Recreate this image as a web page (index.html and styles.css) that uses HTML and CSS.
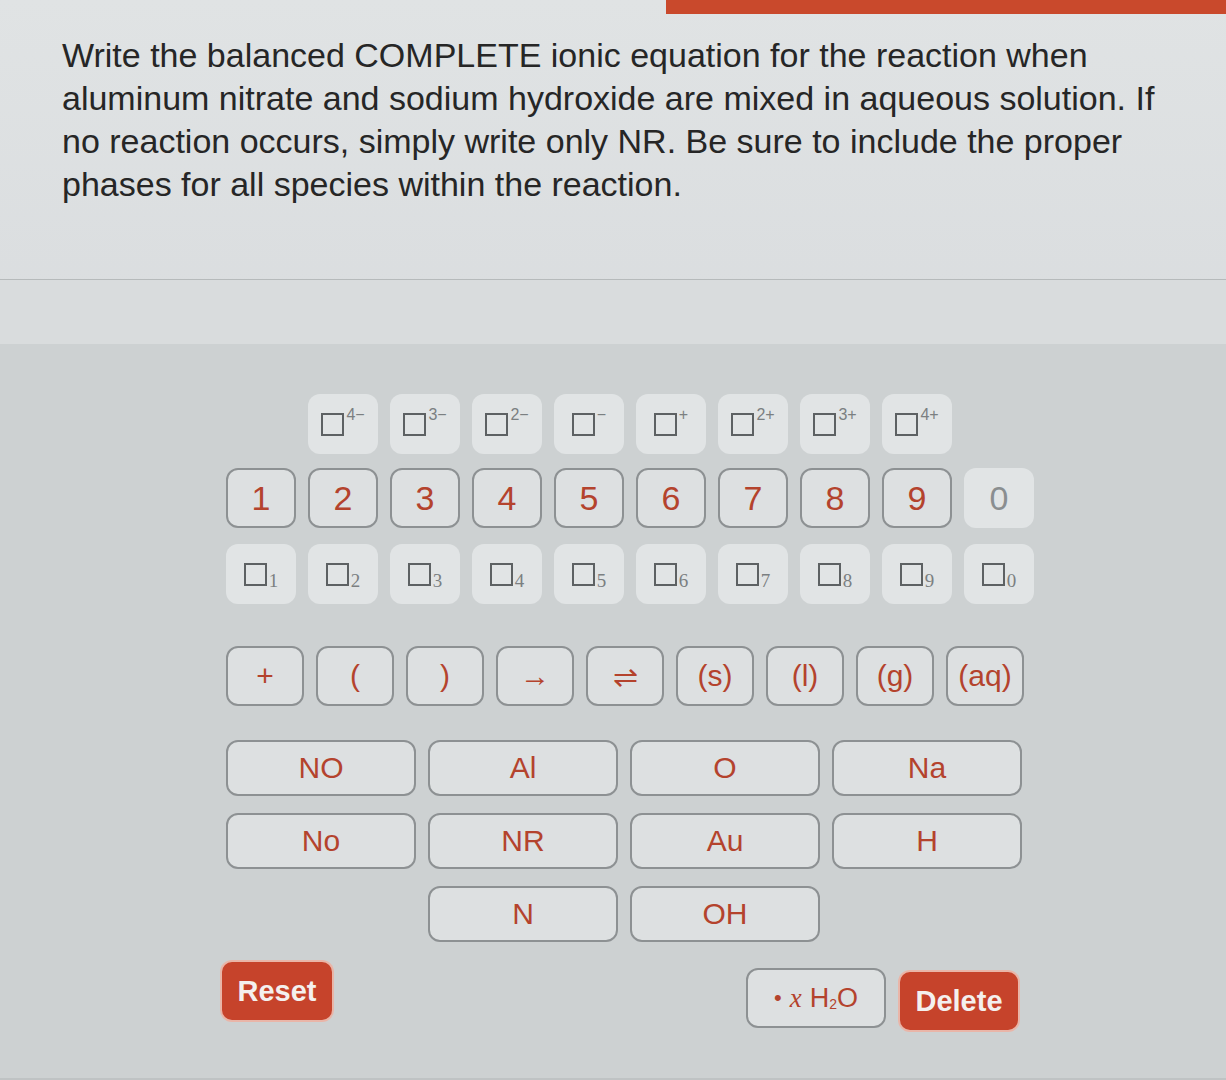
FILE: index.html
```html
<!DOCTYPE html>
<html>
<head>
<meta charset="utf-8">
<link rel="stylesheet" href="styles.css">
</head>
<body>
<div class="page">
  <div class="topbar"><div class="topbar-fill"></div></div>
  <div class="question">
    <p class="qtext">Write the balanced COMPLETE ionic equation for the reaction when<br>aluminum nitrate and sodium hydroxide are mixed in aqueous solution. If<br>no reaction occurs, simply write only NR. Be sure to include the proper<br>phases for all species within the reaction.</p>
  </div>
  <div class="band"></div>
  <div class="panel">
    <div class="palette">
      <div class="row row-charge">
        <div class="tile soft"><span class="box"></span><sup class="sup">4&minus;</sup></div>
        <div class="tile soft"><span class="box"></span><sup class="sup">3&minus;</sup></div>
        <div class="tile soft"><span class="box"></span><sup class="sup">2&minus;</sup></div>
        <div class="tile soft"><span class="box"></span><sup class="sup">&minus;</sup></div>
        <div class="tile soft"><span class="box"></span><sup class="sup">+</sup></div>
        <div class="tile soft"><span class="box"></span><sup class="sup">2+</sup></div>
        <div class="tile soft"><span class="box"></span><sup class="sup">3+</sup></div>
        <div class="tile soft"><span class="box"></span><sup class="sup">4+</sup></div>
      </div>
      <div class="row row-num">
        <div class="tile key num">1</div>
        <div class="tile key num">2</div>
        <div class="tile key num">3</div>
        <div class="tile key num">4</div>
        <div class="tile key num">5</div>
        <div class="tile key num">6</div>
        <div class="tile key num">7</div>
        <div class="tile key num">8</div>
        <div class="tile key num">9</div>
        <div class="tile soft num dim">0</div>
      </div>
      <div class="row row-sub">
        <div class="tile soft"><span class="box"></span><sub class="sub">1</sub></div>
        <div class="tile soft"><span class="box"></span><sub class="sub">2</sub></div>
        <div class="tile soft"><span class="box"></span><sub class="sub">3</sub></div>
        <div class="tile soft"><span class="box"></span><sub class="sub">4</sub></div>
        <div class="tile soft"><span class="box"></span><sub class="sub">5</sub></div>
        <div class="tile soft"><span class="box"></span><sub class="sub">6</sub></div>
        <div class="tile soft"><span class="box"></span><sub class="sub">7</sub></div>
        <div class="tile soft"><span class="box"></span><sub class="sub">8</sub></div>
        <div class="tile soft"><span class="box"></span><sub class="sub">9</sub></div>
        <div class="tile soft"><span class="box"></span><sub class="sub">0</sub></div>
      </div>
      <div class="row row-sym">
        <div class="tile key sym">+</div>
        <div class="tile key sym">(</div>
        <div class="tile key sym">)</div>
        <div class="tile key sym">&rarr;</div>
        <div class="tile key sym">&#8652;</div>
        <div class="tile key sym">(s)</div>
        <div class="tile key sym">(l)</div>
        <div class="tile key sym">(g)</div>
        <div class="tile key sym">(aq)</div>
      </div>
      <div class="elements">
        <div class="ecol">
          <div class="tile key el">NO</div>
          <div class="tile key el">No</div>
        </div>
        <div class="ecol">
          <div class="tile key el">Al</div>
          <div class="tile key el">NR</div>
          <div class="tile key el">N</div>
        </div>
        <div class="ecol">
          <div class="tile key el">O</div>
          <div class="tile key el">Au</div>
          <div class="tile key el">OH</div>
        </div>
        <div class="ecol">
          <div class="tile key el">Na</div>
          <div class="tile key el">H</div>
        </div>
      </div>
      <div class="actions">
        <div class="btn-red reset">Reset</div>
        <div class="spacer"></div>
        <div class="tile key water"><span class="dot">&bull;</span><span class="xvar">x</span><span>H<sub class="wsub">2</sub>O</span></div>
        <div class="btn-red delete">Delete</div>
      </div>
    </div>
  </div>
</div>
</body>
</html>
```

FILE: styles.css
```css
html, body {
  margin: 0;
  padding: 0;
}
body {
  width: 1226px;
  height: 1080px;
  overflow: hidden;
  background: #d2d6d7;
  font-family: "Liberation Sans", Arial, sans-serif;
}
.page {
  width: 1226px;
  height: 1080px;
  display: flex;
  flex-direction: column;
  background: linear-gradient(180deg, #e0e3e4 0%, #dadddf 30%, #cfd3d4 60%, #cdd1d2 100%);
}
.topbar {
  height: 14px;
  display: flex;
  justify-content: flex-end;
}
.topbar-fill {
  width: 560px;
  height: 14px;
  background: #c9492c;
}
.question {
  height: 266px;
  padding: 20px 0 0 62px;
  box-sizing: border-box;
  border-bottom: 1px solid #b6babb;
}
.qtext {
  margin: 0;
  width: 1164px;
  font-size: 34px;
  line-height: 43px;
  color: #262626;
  white-space: nowrap;
}
.band {
  height: 64px;
  background: #d9dcdd;
}
.panel {
  flex: 1;
  background: #cdd1d2;
  padding-top: 50px;
  border-bottom: 2px solid #bfc3c4;
}
.palette {
  margin-left: 226px;
  width: 810px;
  display: flex;
  flex-direction: column;
}
.row {
  display: flex;
  gap: 12px;
}
.row-charge {
  padding-left: 82px;
}
.row-num {
  margin-top: 14px;
}
.row-sub {
  margin-top: 16px;
}
.row-sym {
  margin-top: 42px;
}
.tile {
  box-sizing: border-box;
  display: flex;
  align-items: center;
  justify-content: center;
  border-radius: 12px;
  color: #b4432d;
}
.row .tile {
  width: 70px;
  height: 60px;
}
.soft {
  background: #e1e4e5;
}
.key {
  background: #dde0e1;
  border: 2px solid #8d9193;
}
.num {
  font-size: 34px;
}
.dim {
  color: #8a8e90;
}
.box {
  display: inline-block;
  width: 23px;
  height: 23px;
  border: 2px solid #5d6163;
  box-sizing: border-box;
}
.sup {
  font-size: 16px;
  color: #7b7f81;
  align-self: flex-start;
  margin-top: 13px;
  margin-left: 2px;
  vertical-align: baseline;
  line-height: 1;
}
.sub {
  font-family: "Liberation Serif", serif;
  font-size: 19px;
  color: #7b7f81;
  align-self: flex-end;
  margin-bottom: 14px;
  margin-left: 2px;
  line-height: 1;
  vertical-align: baseline;
}
.row-sym .tile {
  width: 78px;
  font-size: 30px;
}
.elements {
  margin-top: 34px;
  display: flex;
  gap: 12px;
}
.ecol {
  width: 190px;
  display: flex;
  flex-direction: column;
  gap: 17px;
}
.el {
  height: 56px;
  font-size: 30px;
}
.actions {
  margin-top: 20px;
  display: flex;
  align-items: flex-start;
  gap: 14px;
}
.btn-red {
  background: #c6432b;
  color: #f4f0ee;
  font-weight: bold;
  font-size: 29px;
  border-radius: 10px;
  display: flex;
  align-items: center;
  justify-content: center;
  box-shadow: 0 0 0 2px #e9b5a8;
}
.reset {
  width: 110px;
  height: 58px;
  margin-left: -4px;
}
.spacer {
  flex: 1;
}
.water {
  width: 140px;
  height: 60px;
  margin-top: 6px;
  font-size: 27px;
  gap: 8px;
}
.dot {
  font-size: 22px;
}
.xvar {
  font-family: "Liberation Serif", serif;
  font-style: italic;
  font-size: 27px;
}
.wsub {
  font-size: 14px;
  vertical-align: -2px;
}
.delete {
  width: 118px;
  height: 58px;
  margin-top: 10px;
  margin-right: 18px;
}
```
